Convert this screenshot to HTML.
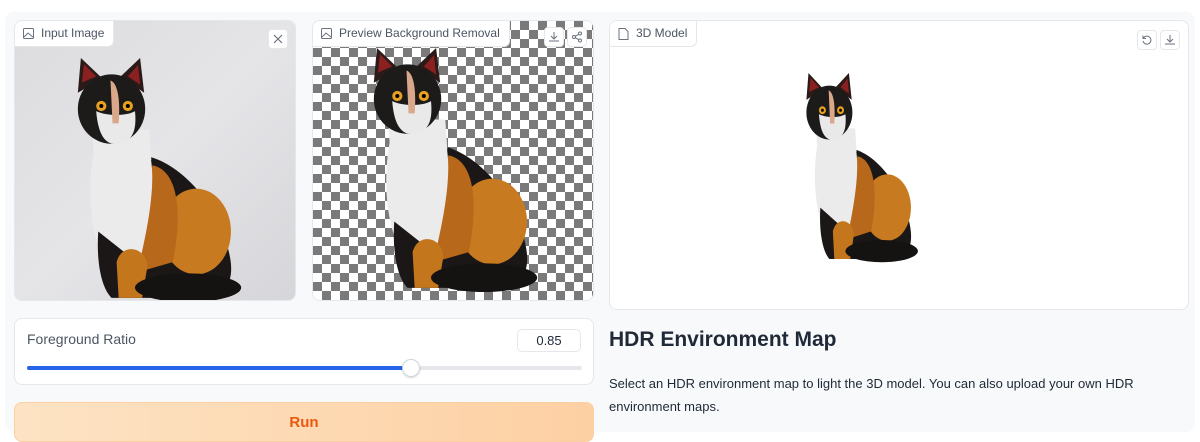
<!DOCTYPE html>
<html><head><meta charset="utf-8"><style>
*{box-sizing:border-box;margin:0;padding:0}
body{width:1200px;height:424px;overflow:hidden;background:#fff;font-family:"Liberation Sans",sans-serif;position:relative}
.panel{position:absolute;left:5px;top:12px;width:1190px;height:420px;background:#f8f9fa;border-radius:8px}
.box{position:absolute;border:1px solid #e5e7eb;border-radius:8px;overflow:hidden;background:#fff}
.lbl{position:absolute;left:0;top:0;height:26px;background:#fff;border-right:1px solid #e5e7eb;border-bottom:1px solid #e5e7eb;border-radius:0 0 6px 0;font-size:12px;color:#4b5563;line-height:25px;padding:0 9px 0 26px;white-space:nowrap}
.lbl svg{position:absolute;left:8px;top:7px}
.btn{position:absolute;width:20px;height:20px;background:#fff;border:1px solid #e5e7eb;border-radius:4px}
.btn svg{position:absolute;left:3px;top:3px}
.checker{background-color:#fff;background-image:linear-gradient(45deg,#7a7a7a 25%,transparent 25%,transparent 75%,#7a7a7a 75%),linear-gradient(45deg,#7a7a7a 25%,transparent 25%,transparent 75%,#7a7a7a 75%);background-size:18px 18px;background-position:0 0,9px 9px}
</style></head><body>
<svg width="0" height="0" style="position:absolute">
<defs>
<g id="cat">
<path d="M60 95 C95 95 140 140 150 190 C156 215 150 230 130 235 L60 235 Z" fill="#1b1717"/>
<ellipse cx="118" cy="170" rx="34" ry="42" fill="#c77a1f"/>
<path d="M75 105 C100 110 105 150 95 200 L60 210 Z" fill="#b8681b"/>
<path d="M18 90 C10 130 15 180 30 200 L60 210 C70 170 80 120 72 92 Z" fill="#ecebeb"/>
<path d="M16 70 L72 70 L74 100 L18 100 Z" fill="#ecebeb"/>
<path d="M22 170 C20 200 25 225 35 235 L60 235 L60 200 Z" fill="#1b1717"/>
<path d="M40 200 C45 180 70 185 70 205 L65 235 L42 235 Z" fill="#c4761d"/>
<ellipse cx="110" cy="225" rx="52" ry="14" fill="#151212"/>
<path d="M2 34 L5 0 L26 20 Z" fill="#2a1a18"/><path d="M6 24 L8 6 L20 18 Z" fill="#8a2020"/>
<path d="M44 18 L63 0 L67 34 Z" fill="#2a1a18"/><path d="M51 18 L61 7 L63 26 Z" fill="#8a2020"/>
<ellipse cx="35" cy="50" rx="33" ry="34" fill="#1d1a1a"/>
<path d="M20 52 C22 77 30 86 42 84 C55 82 60 72 58 52 C50 57 30 57 20 52 Z" fill="#e9e9ea"/>
<path d="M34 22 C40 24 44 37 42 64 L36 64 Z" fill="#d9a88a"/>
<circle cx="25" cy="47" r="5" fill="#e8a020"/><circle cx="25" cy="47" r="2" fill="#000"/>
<circle cx="51" cy="47" r="5" fill="#e8a020"/><circle cx="51" cy="47" r="2" fill="#000"/>
</g>
</defs></svg>
<div class="panel"></div>

<div class="box" style="left:14px;top:20px;width:282px;height:281px;background:linear-gradient(135deg,#dcdcdf,#e5e5e8 50%,#d6d6da)">
<svg style="position:absolute;left:60px;top:37px" width="170" height="245" viewBox="0 0 165 240"><use href="#cat"/></svg>
<div class="lbl"><svg width="11" height="11" viewBox="0 0 11 11" fill="none" stroke="#6b7280"><rect x=".5" y=".5" width="10" height="10" rx="1"/><path d="M1 9 L5 5 L10 9"/></svg>Input Image</div>
<div class="btn" style="left:253px;top:8px"><svg width="12" height="12" viewBox="0 0 12 12" stroke="#6b7280" stroke-width="1.2"><path d="M2 2L10 10M10 2L2 10"/></svg></div>
</div>

<div class="box checker" style="left:312px;top:20px;width:282px;height:281px">
<svg style="position:absolute;left:58px;top:27px" width="170" height="245" viewBox="0 0 165 240"><use href="#cat"/></svg>
<div class="lbl"><svg width="11" height="11" viewBox="0 0 11 11" fill="none" stroke="#6b7280"><rect x=".5" y=".5" width="10" height="10" rx="1"/><path d="M1 9 L5 5 L10 9"/></svg>Preview Background Removal</div>
<div class="btn" style="left:231px;top:6px"><svg width="12" height="12" viewBox="0 0 12 12" fill="none" stroke="#6b7280"><path d="M6 1V8M3 5L6 8L9 5M1 10H11"/></svg></div>
<div class="btn" style="left:254px;top:6px"><svg width="12" height="12" viewBox="0 0 12 12" fill="none" stroke="#6b7280"><circle cx="9" cy="2.5" r="1.5"/><circle cx="3" cy="6" r="1.5"/><circle cx="9" cy="9.5" r="1.5"/><path d="M4.3 5.2L7.7 3.3M4.3 6.8L7.7 8.7"/></svg></div>
</div>

<div class="box" style="left:609px;top:20px;width:580px;height:290px">
<svg style="position:absolute;left:195px;top:52px" width="115" height="190" viewBox="0 0 165 240" preserveAspectRatio="none"><use href="#cat"/></svg>
<div class="lbl"><svg width="11" height="12" viewBox="0 0 11 12" fill="none" stroke="#6b7280"><path d="M1 .5H7L10 3.5V11.5H1Z"/></svg>3D Model</div>
<div class="btn" style="left:527px;top:9px"><svg width="12" height="12" viewBox="0 0 12 12" fill="none" stroke="#6b7280"><path d="M2.5 4A4 4 0 1 1 2 7M2 1.5V4.5H5"/></svg></div>
<div class="btn" style="left:550px;top:9px"><svg width="12" height="12" viewBox="0 0 12 12" fill="none" stroke="#6b7280"><path d="M6 1V8M3 5L6 8L9 5M1 10H11"/></svg></div>
</div>

<div class="box" style="left:14px;top:318px;width:580px;height:67px">
<div style="position:absolute;left:12px;top:12px;font-size:14px;color:#4b5563">Foreground Ratio</div>
<div style="position:absolute;left:502px;top:10px;width:64px;height:23px;border:1px solid #e5e7eb;border-radius:5px;font-size:13px;color:#1f2937;text-align:center;line-height:21px">0.85</div>
<div style="position:absolute;left:12px;top:47px;width:555px;height:4px;border-radius:2px;background:#e5e7eb"></div>
<div style="position:absolute;left:12px;top:47px;width:385px;height:4px;border-radius:2px;background:#2563eb"></div>
<div style="position:absolute;left:387px;top:40px;width:18px;height:18px;border-radius:50%;background:#fff;border:1px solid #d1d5db;box-shadow:0 1px 2px rgba(0,0,0,.15)"></div>
</div>

<div style="position:absolute;left:14px;top:402px;width:580px;height:40px;border-radius:8px;background:linear-gradient(90deg,#fde3c4,#fdd0a3);border:1px solid #fbcfa0;text-align:center;font-size:15px;font-weight:bold;color:#ea580c;padding-top:11px">Run</div>

<div style="position:absolute;left:609px;top:328px;font-size:21px;font-weight:bold;color:#1f2937">HDR Environment Map</div>
<div style="position:absolute;left:609px;top:372px;width:560px;font-size:13px;line-height:23px;color:#1f2937">Select an HDR environment map to light the 3D model. You can also upload your own HDR environment maps.</div>
</body></html>
